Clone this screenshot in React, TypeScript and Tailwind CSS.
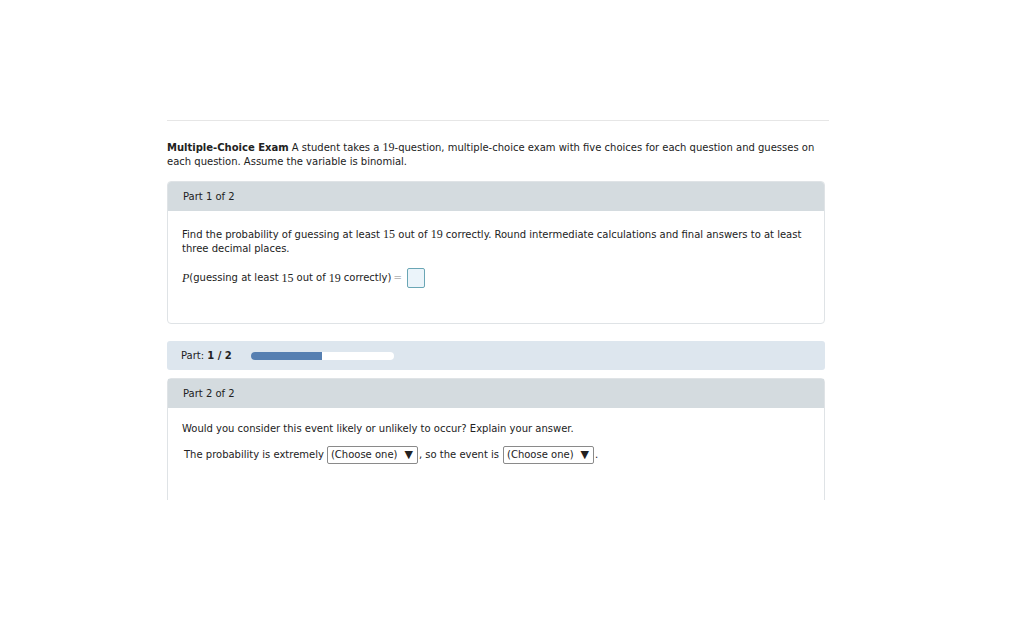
import React from "react";

const serif = "font-['Liberation_Serif',serif] text-[12px]";

function Choose() {
  return (
    <span className="mx-[1px] inline-flex h-[18px] items-center gap-[7px] rounded-[2px] border border-[#8a8a8a] bg-white pl-[3px] pr-[4px] align-middle">
      <span>(Choose one)</span>
      <span className="text-[11px]">▼</span>
    </span>
  );
}

function PartHeader({ label }: { label: string }) {
  return (
    <div className="flex h-[29px] items-center bg-[#d4dbdf] px-[15px] text-[#222]">{label}</div>
  );
}

export default function App() {
  return (
    <div className="h-[640px] w-[1024px] bg-white font-['DejaVu_Sans',Verdana,sans-serif] text-[10px] leading-[14px] text-[#222]">
      <div className="ml-[167px] h-[500px] w-[662px] overflow-hidden pt-[120px]">
        <div className="border-t border-[#e6e6e6]" />

        {/* Question intro */}
        <p className="mt-[19px] pr-[8px]">
          <b>Multiple-Choice Exam</b> A student takes a <span className={serif}>19</span>-question,
          multiple-choice exam with five choices for each question and guesses on each question.
          Assume the variable is binomial.
        </p>

        {/* Part 1 */}
        <div className="mt-[12px] mr-[4px] h-[143px] overflow-hidden rounded-[4px] border border-[#dfe3e6]">
          <PartHeader label="Part 1 of 2" />
          <div className="pl-[14px] pr-[8px] pt-[16px]">
            <p>
              Find the probability of guessing at least <span className={serif}>15</span> out of{" "}
              <span className={serif}>19</span> correctly. Round intermediate calculations and final
              answers to at least three decimal places.
            </p>
            <div className="mt-[12px] flex items-center">
              <span className={`${serif} italic`}>P</span>
              <span>(guessing at least </span>
              <span className={`${serif} mx-[3px]`}>15</span>
              <span>out of</span>
              <span className={`${serif} mx-[3px]`}>19</span>
              <span>correctly)</span>
              <span className="ml-[2px] text-[#bbb]">=</span>
              <span className="ml-[5px] inline-block h-[20px] w-[18px] rounded-[2px] border border-[#6aa6b5] bg-[#ebf4fa]" />
            </div>
          </div>
        </div>

        {/* Progress */}
        <div className="mt-[17px] mr-[4px] flex h-[29px] items-center rounded-[3px] bg-[#dde6ee] px-[14px]">
          <span>
            Part: <b>1 / 2</b>
          </span>
          <div className="ml-[19px] h-[8px] w-[143px] overflow-hidden rounded-full bg-white">
            <div className="h-full w-[71px] bg-[#567fb1]" />
          </div>
        </div>

        {/* Part 2 */}
        <div className="mt-[8px] mr-[4px] h-[200px] rounded-t-[4px] border border-[#dfe3e6]">
          <PartHeader label="Part 2 of 2" />
          <div className="px-[14px] pt-[14px]">
            <p>Would you consider this event likely or unlikely to occur? Explain your answer.</p>
            <div className="mt-[10px] ml-[2px] flex items-center">
              <span>The probability is extremely</span>
              <span className="ml-[2px]" />
              <Choose />
              <span>, so the event is</span>
              <span className="ml-[3px]" />
              <Choose />
              <span>.</span>
            </div>
          </div>
        </div>
      </div>
    </div>
  );
}
